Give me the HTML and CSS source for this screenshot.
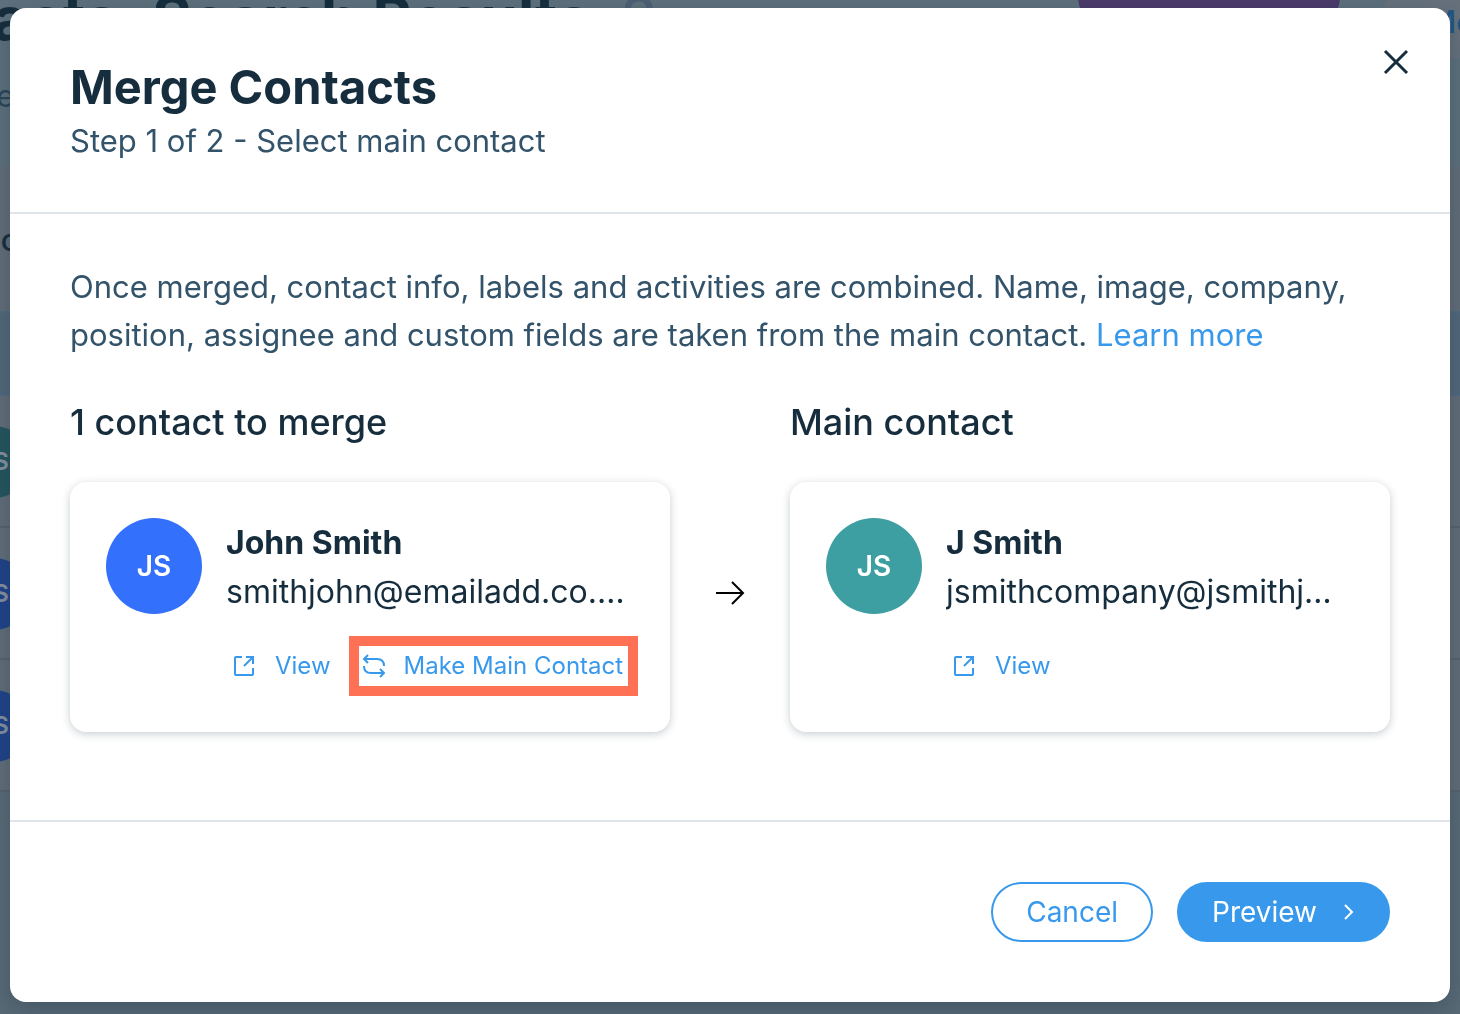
FILE: index.html
```html
<!DOCTYPE html>
<html lang="en">
<head>
  <meta charset="UTF-8" />
  <meta name="viewport" content="width=device-width, initial-scale=1" />
  <title>Merge Contacts</title>
  <link rel="stylesheet" href="styles.css">
</head>
<body>

<div class="page" aria-hidden="true">
  <div class="page-header">
    <div class="page-title">Contacts: Search Results <span class="count">2</span></div>
    <div class="page-upgrade"></div>
    <div class="page-more">More</div>
    <div class="page-subtitle">Manage</div>
  </div>
  <div class="page-table">
    <div class="table-bar">Co</div>
    <div class="table-head"></div>
    <div class="table-row"><span class="row-avatar teal">JS</span></div>
    <div class="table-row"><span class="row-avatar blue">JS</span></div>
    <div class="table-row"><span class="row-avatar blue">JS</span></div>
  </div>
</div>

<div class="overlay">
  <div class="modal" role="dialog" aria-labelledby="modalTitle">
    <header class="modal-header">
      <div>
        <h1 id="modalTitle">Merge Contacts</h1>
        <p class="step">Step 1 of 2 - Select main contact</p>
      </div>
      <button type="button" class="close-btn" aria-label="Close">
        <svg width="28" height="28" viewBox="0 0 28 28"><path d="M3 3L25 25M25 3L3 25" /></svg>
      </button>
    </header>

    <main class="modal-body">
      <p class="intro">Once merged, contact info, labels and activities are combined. Name, image, company, position, assignee and custom fields are taken from the main contact. <a href="#">Learn more</a></p>

      <div class="contacts">
        <section class="column">
          <h2>1 contact to merge</h2>
          <div class="card">
            <span class="avatar blue">JS</span>
            <div class="details">
              <h3>John Smith</h3>
              <p class="email">smithjohn@emailadd.co.…</p>
              <div class="actions">
                <button type="button" class="text-btn">
                  <svg width="22" height="22" viewBox="0 0 22 22"><path d="M9 2H3Q2 2 2 3V19Q2 20 3 20H19Q20 20 20 19V13M13 2H20V9M20 2L11 11" /></svg>
                  View
                </button>
                <button type="button" class="text-btn highlight">
                  <svg width="24" height="24" viewBox="0 0 24 24"><path d="M6 1L2 5L6 9M2 5H15Q22 5 22 12M18 15L22 19L18 23M22 19H9Q2 19 2 12" /></svg>
                  Make Main Contact
                </button>
              </div>
            </div>
          </div>
        </section>

        <svg class="arrow" width="30" height="24" viewBox="0 0 30 24"><path d="M1 12H28M17 1L28 12L17 23" /></svg>

        <section class="column">
          <h2>Main contact</h2>
          <div class="card">
            <span class="avatar teal">JS</span>
            <div class="details">
              <h3>J Smith</h3>
              <p class="email">jsmithcompany@jsmithj…</p>
              <div class="actions">
                <button type="button" class="text-btn">
                  <svg width="22" height="22" viewBox="0 0 22 22"><path d="M9 2H3Q2 2 2 3V19Q2 20 3 20H19Q20 20 20 19V13M13 2H20V9M20 2L11 11" /></svg>
                  View
                </button>
              </div>
            </div>
          </div>
        </section>
      </div>
    </main>

    <footer class="modal-footer">
      <button type="button" class="btn">Cancel</button>
      <button type="button" class="btn primary">
        Preview
        <svg width="12" height="18" viewBox="0 0 12 18"><path d="M2 2L9 9L2 16" /></svg>
      </button>
    </footer>
  </div>
</div>

</body>
</html>
```
FILE: styles.css
```css
* { box-sizing: border-box; }

body {
  margin: 0;
  font-family: Inter, 'Open Sans', sans-serif;
  color: #162d3d;
  background: #596a76;
}

h1, h2, h3, p { margin: 0; }

button {
  font-family: inherit;
  cursor: pointer;
}

svg {
  fill: none;
  stroke: currentColor;
  stroke-width: 2;
  flex-shrink: 0;
}

/* contacts list behind the dialog */
.page {
  position: fixed;
  inset: 0;
  overflow: hidden;
}

.page-header {
  position: relative;
  height: 166px;
  background: #5d707c;
}

.page-title {
  position: absolute;
  left: -148px;
  top: -16px;
  font-size: 60px;
  line-height: 68px;
  font-weight: 700;
  white-space: nowrap;
}

.count {
  margin-left: 16px;
  color: #4b6075;
  font-weight: 500;
}

.page-upgrade {
  position: absolute;
  right: 120px;
  top: -40px;
  width: 262px;
  height: 72px;
  border-radius: 36px;
  background: #4b3a6b;
}

.page-more {
  position: absolute;
  right: -60px;
  top: -14px;
  width: 140px;
  height: 72px;
  padding-left: 48px;
  border-radius: 36px 0 0 36px;
  background: #66717c;
  color: #205686;
  font-size: 31px;
  line-height: 72px;
  font-weight: 500;
}

.page-subtitle {
  position: absolute;
  left: -104px;
  top: 78px;
  color: #2b4559;
  font-size: 31px;
  line-height: 36px;
}

.page-table { background: #626d79; }

.table-bar {
  height: 145px;
  margin-left: -22px;
  font-size: 31px;
  line-height: 148px;
  font-weight: 500;
}

.table-head {
  height: 85px;
  border-top: 2px solid #506b82;
  border-bottom: 2px solid #506b82;
  background: #52687a;
}

.table-row {
  height: 132px;
  padding: 30px 0;
  border-bottom: 2px solid #57636f;
}

.row-avatar {
  display: block;
  width: 72px;
  height: 72px;
  margin-left: -42px;
  border-radius: 50%;
  color: #8590a0;
  font-size: 24px;
  line-height: 72px;
  font-weight: 600;
  text-align: center;
}

.row-avatar.teal { background: #25555f; }
.row-avatar.blue { background: #20438a; }

/* dialog */
.overlay {
  position: relative;
  min-height: 100vh;
  padding: 8px 10px 12px;
  display: flex;
}

.modal {
  flex: 1;
  min-width: 0;
  display: flex;
  flex-direction: column;
  background: white;
  border-radius: 16px;
  box-shadow: 0 8px 24px rgba(22, 45, 61, 0.3);
}

.modal-header {
  display: flex;
  justify-content: space-between;
  align-items: flex-start;
  padding: 49px 40px 47px 60px;
  border-bottom: 2px solid #dfe5eb;
}

h1 {
  font-size: 47px;
  line-height: 60px;
  font-weight: 700;
}

.step {
  font-size: 31px;
  line-height: 48px;
  color: #32536a;
}

.close-btn {
  display: flex;
  padding: 0;
  margin-top: -9px;
  border: none;
  background: none;
  color: #162d3d;
}

.close-btn svg { stroke-width: 3; }

.modal-body {
  flex: 1;
  padding: 49px 60px;
}

.intro {
  font-size: 31px;
  line-height: 48px;
  color: #32536a;
}

a {
  color: #3899ec;
  text-decoration: none;
}

.contacts {
  display: flex;
  margin-top: 36px;
}

.column {
  flex: 1;
  min-width: 0;
}

h2 {
  font-size: 36px;
  line-height: 54px;
  font-weight: 500;
}

.card {
  display: flex;
  gap: 24px;
  height: 250px;
  margin-top: 33px;
  padding: 36px;
  border-radius: 16px;
  box-shadow: 0 2px 8px rgba(22, 45, 61, 0.24);
}

.avatar {
  flex-shrink: 0;
  width: 96px;
  height: 96px;
  border-radius: 50%;
  color: white;
  font-size: 28px;
  line-height: 96px;
  font-weight: 600;
  text-align: center;
}

.avatar.blue { background: #3370fb; }
.avatar.teal { background: #3d9fa1; }

.details {
  flex: 1;
  min-width: 0;
}

h3 {
  font-size: 32px;
  line-height: 50px;
  font-weight: 700;
}

.email {
  font-size: 32px;
  line-height: 48px;
  white-space: nowrap;
  overflow: hidden;
  text-overflow: ellipsis;
}

.actions {
  display: flex;
  align-items: center;
  gap: 18px;
  min-height: 60px;
  margin: 20px -8px 0 7px;
}

.text-btn {
  display: flex;
  align-items: center;
  gap: 20px;
  padding: 0;
  border: none;
  background: none;
  color: #3899ec;
  font-size: 24px;
  line-height: 40px;
  white-space: nowrap;
}

.text-btn.highlight {
  gap: 18px;
  padding: 0 5px 0 3px;
  border: 10px solid #ff7155;
}

.arrow {
  margin: 186px 45px 0;
  color: black;
}

.modal-footer {
  display: flex;
  justify-content: flex-end;
  gap: 24px;
  padding: 60px;
  border-top: 2px solid #dfe5eb;
}

.btn {
  display: flex;
  align-items: center;
  gap: 26px;
  height: 60px;
  padding: 0 33px;
  border: 2px solid #3899ec;
  border-radius: 30px;
  background: white;
  color: #3899ec;
  font-size: 28px;
}

.btn.primary {
  background: #3899ec;
  color: white;
}
```
